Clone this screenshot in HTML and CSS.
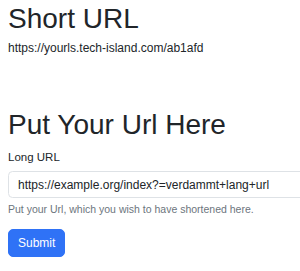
FILE: index.html
```html
<!DOCTYPE html>
<html lang="en">
<head>
    <meta charset="UTF-8">
    <meta name="viewport" content="width=device-width, initial-scale=1.0">
    <title>Short URL</title>
    <link rel="stylesheet" href="styles.css">
</head>
<body>
    <div class="page">
        <section class="result">
            <h1 class="title">Short URL</h1>
            <p class="short-url">https://yourls.tech-island.com/ab1afd</p>
        </section>

        <form class="shorten-form" onsubmit="return false">
            <h1 class="title form-title">Put Your Url Here</h1>
            <label for="longUrl">Long URL</label>
            <input type="text" id="longUrl" class="form-control" value="https://example.org/index?=verdammt+lang+url">
            <div class="form-text">Put your Url, which you wish to have shortened here.</div>
            <button type="submit" class="btn-primary">Submit</button>
        </form>
    </div>
</body>
</html>
```

FILE: styles.css
```css
:root {
    --primary: #2f72f6;
    --text: #212529;
    --muted: #6c757d;
    --border: #dee2e6;
    --font-main: "Liberation Sans", Arial, Helvetica, sans-serif;
}

* {
    box-sizing: border-box;
}

html,
body {
    overflow: hidden;
}

body {
    margin: 0;
    font-family: var(--font-main);
    font-size: 12px;
    line-height: 1.5;
    color: var(--text);
    background: #fff;
}

.page {
    width: 340px;
    padding: 0 8px;
}

.result {
    padding-top: 2px;
    margin-bottom: 51px;
}

.title {
    font-size: 28px;
    font-weight: 500;
    line-height: 1.2;
    margin: 0 0 3px;
}

.short-url {
    margin: 0;
    line-height: 18px;
}

.form-title {
    margin-bottom: 7px;
}

label {
    display: block;
    margin-bottom: 5px;
    font-size: 11.5px;
    line-height: 18px;
}

.form-control {
    display: block;
    width: 100%;
    padding: 3.5px 9px;
    font-family: var(--font-main);
    font-size: 12px;
    line-height: 18px;
    color: var(--text);
    background: #fff;
    border: 1px solid var(--border);
    border-radius: 4.5px;
    outline: none;
}

.form-text {
    margin-top: 4px;
    font-size: 10.5px;
    line-height: 1.5;
    color: var(--muted);
}

.btn-primary {
    display: inline-block;
    margin-top: 11px;
    padding: 4px 9px;
    font-family: var(--font-main);
    font-size: 12px;
    line-height: 18px;
    color: #fff;
    background: var(--primary);
    border: 1px solid var(--primary);
    border-radius: 5px;
    cursor: pointer;
}
```
